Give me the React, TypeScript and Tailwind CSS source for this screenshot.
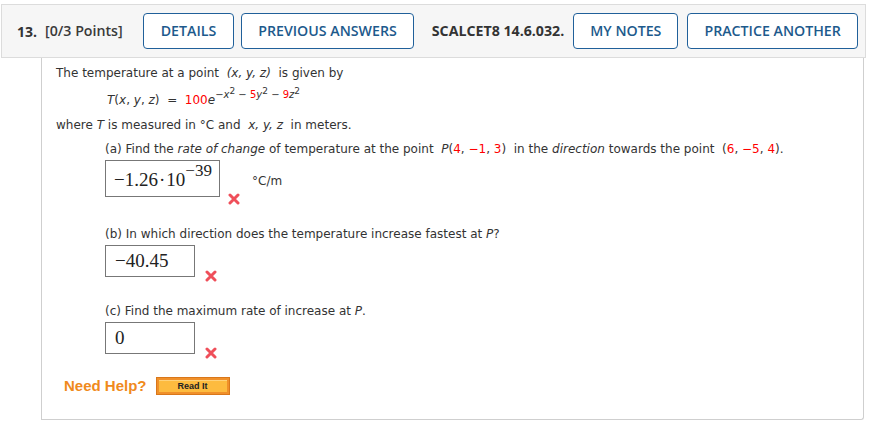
import React from "react";

const XMark = () => (
  <svg width="12" height="12" viewBox="0 0 12 12" className="block">
    <path d="M2 2 L10 10 M10 2 L2 10" stroke="#ef4f5a" strokeWidth="3" strokeLinecap="round" />
  </svg>
);

const R = ({ children }: { children: React.ReactNode }) => <span className="text-[#ff0000]">{children}</span>;

export default function App() {
  const hdrFont = { fontFamily: '"Open Sans", "Noto Sans", sans-serif' };
  const btn =
    "h-[36px] border border-[#20609a] rounded-[4px] text-[#1d5a8c] text-[14.2px] font-semibold flex items-center bg-white whitespace-nowrap shrink-0";
  const serif = { fontFamily: '"Liberation Serif", "Times New Roman", serif' };
  return (
    <div className="w-[871px] h-[428px] bg-white pt-[4px] pl-[1px]">
      <div
        className="w-[865px] h-[54px] bg-[#f6f6f6] border border-[#dcdcdc] flex items-center text-[#333] whitespace-nowrap"
        style={hdrFont}
      >
        <span className="ml-[15px] text-[14px] font-bold shrink-0">13.</span>
        <span className="ml-[8px] text-[14.2px] font-semibold text-[#3a3a3a] shrink-0">[0/3 Points]</span>
        <div className={btn + " ml-[20px] px-[17px]"}>DETAILS</div>
        <div className={btn + " ml-[7px] px-[16px]"}>PREVIOUS ANSWERS</div>
        <span className="ml-[18px] text-[14.2px] font-bold text-[#333] shrink-0">SCALCET8 14.6.032.</span>
        <div className={btn + " ml-[9px] px-[16px]"}>MY NOTES</div>
        <div className={btn + " ml-[9px] px-[16px]"}>PRACTICE ANOTHER</div>
      </div>
      <div
        className="ml-[40px] w-[823px] h-[362px] border-l border-r border-b border-[#cfcfcf] rounded-br-[3px] pl-[14px] pt-[3px] text-[#333] text-[12px]"
        style={{ fontFamily: '"DejaVu Sans", Verdana, sans-serif' }}
      >
        <div className="h-[24px] flex items-center">
          <span>
            The temperature at a point&nbsp;&nbsp;<i>(x, y, z)</i>&nbsp;&nbsp;is given by
          </span>
        </div>
        <div className="h-[28px] flex items-end pb-[4px] pl-[51px]">
          <span>
            <i>T</i>(<i>x</i>, <i>y</i>, <i>z</i>)&nbsp;&nbsp;=&nbsp;&nbsp;<R>100</R>
            <i>e</i>
            <span className="relative -top-[6px] text-[10px]">
              −<i>x</i>
              <sup className="text-[9px]">2</sup> − <R>5</R>
              <i>y</i>
              <sup className="text-[9px]">2</sup> − <R>9</R>
              <i>z</i>
              <sup className="text-[9px]">2</sup>
            </span>
          </span>
        </div>
        <div className="h-[24px] flex items-center">
          <span>
            where <i>T</i> is measured in °C and&nbsp;&nbsp;<i>x, y, z</i>&nbsp;&nbsp;in meters.
          </span>
        </div>
        <div className="pl-[49px]">
          <div className="h-[24px] flex items-center">
            <span>
              (a) Find the <i>rate of change</i> of temperature at the point&nbsp;&nbsp;<i>P</i>(<R>4</R>, <R>−1</R>,{" "}
              <R>3</R>)&nbsp;&nbsp;in the <i>direction</i> towards the point&nbsp;&nbsp;(<R>6</R>, <R>−5</R>, <R>4</R>).
            </span>
          </div>
          <div className="flex items-start mt-[-1px]">
            <div
              className="w-[115px] h-[37px] border border-[#777] flex items-end pl-[8px] pb-[2px] text-[19px] text-[#222] whitespace-nowrap"
              style={serif}
            >
              <span>
                −1.26<span className="mx-[1px]">·</span>10
                <span className="relative -top-[10px] text-[17px]">−39</span>
              </span>
            </div>
            <div className="ml-[8px] mt-[33px]">
              <XMark />
            </div>
            <div className="ml-[12px] mt-[12px] text-[12px]">°C/m</div>
          </div>
          <div className="h-[24px] flex items-center mt-[17px]">
            <span>
              (b) In which direction does the temperature increase fastest at <i>P</i>?
            </span>
          </div>
          <div className="flex items-start mt-[-1px]">
            <div
              className="w-[90px] h-[32px] border border-[#777] flex items-center pl-[9px] text-[19px] text-[#222]"
              style={serif}
            >
              −40.45
            </div>
            <div className="ml-[10px] mt-[25px]">
              <XMark />
            </div>
          </div>
          <div className="h-[24px] flex items-center mt-[17px]">
            <span>
              (c) Find the maximum rate of increase at <i>P</i>.
            </span>
          </div>
          <div className="flex items-start mt-[-1px]">
            <div
              className="w-[90px] h-[32px] border border-[#777] flex items-center pl-[9px] text-[19px] text-[#222]"
              style={serif}
            >
              0
            </div>
            <div className="ml-[10px] mt-[25px]">
              <XMark />
            </div>
          </div>
        </div>
        <div className="flex items-center mt-[16px] pl-[8px]">
          <span
            className="text-[15px] font-bold text-[#f08a1c]"
            style={{ fontFamily: '"Liberation Sans", Arial, sans-serif' }}
          >
            Need Help?
          </span>
          <div className="ml-[9px] w-[74px] h-[18px] bg-[#f0902a] border border-[#d9771a] p-[2px]">
            <div
              className="w-full h-full bg-[#fdbb3f] border-t border-[#ffd27a] flex items-center justify-center text-[9px] font-bold text-[#222]"
              style={{ fontFamily: '"Liberation Sans", Arial, sans-serif' }}
            >
              Read It
            </div>
          </div>
        </div>
      </div>
    </div>
  );
}
